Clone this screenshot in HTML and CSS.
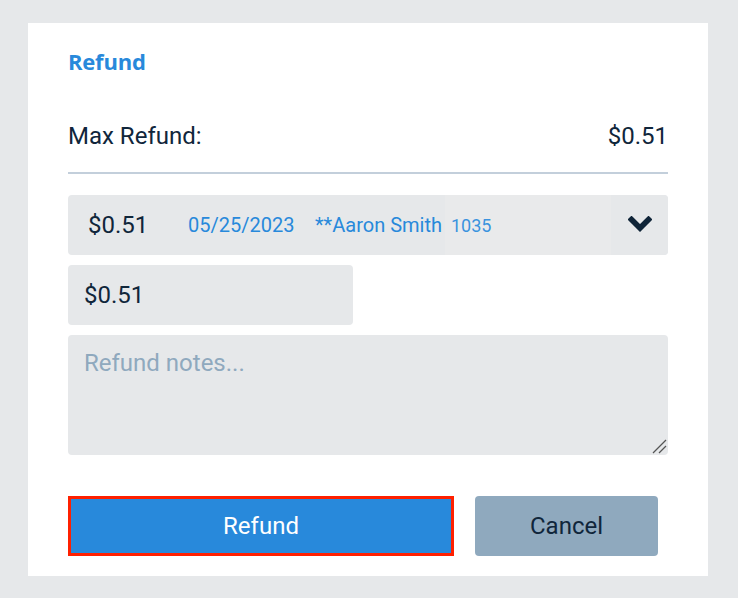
FILE: index.html
```html
<!DOCTYPE html>
<html>
<head>
<meta charset="utf-8">
<link rel="stylesheet" href="styles.css">
</head>
<body>
<div class="card">
  <h2 class="title">Refund</h2>
  <div class="max-row">
    <span>Max Refund:</span>
    <span>$0.51</span>
  </div>
  <div class="divider"></div>
  <div class="select">
    <span class="sel-amount">$0.51</span>
    <span class="sel-date">05/25/2023</span>
    <span class="sel-name">**Aaron Smith</span>
    <span class="sel-rest"><span class="sel-num">1035</span></span>
    <span class="sel-arrow">
      <svg width="24" height="16" viewBox="0 0 24 16"><polyline points="3.5,3.5 12,12 20.5,3.5" fill="none" stroke="#0f2438" stroke-width="5.5" stroke-linejoin="miter" stroke-linecap="square"/></svg>
    </span>
  </div>
  <div class="amount-input">$0.51</div>
  <div class="notes">
    <span class="placeholder">Refund notes...</span>
    <svg class="grip" width="16" height="16" viewBox="0 0 16 16"><line x1="2" y1="15" x2="15" y2="2" stroke="#555" stroke-width="1.3"/><line x1="8" y1="15" x2="15" y2="8" stroke="#555" stroke-width="1.3"/></svg>
  </div>
  <div class="actions">
    <button class="btn btn-primary">Refund</button>
    <button class="btn btn-cancel">Cancel</button>
  </div>
</div>
</body>
</html>
```
FILE: styles.css
```css
html, body {
  margin: 0;
  padding: 0;
}
body {
  background: #e6e8ea;
  font-family: Roboto, "Liberation Sans", sans-serif;
  color: #10263b;
  width: 738px;
  height: 598px;
  overflow: hidden;
}
.card {
  box-sizing: border-box;
  margin: 23px 0 0 28px;
  width: 680px;
  height: 553px;
  background: #ffffff;
  padding: 0 40px;
  display: flex;
  flex-direction: column;
}
.title {
  margin: 0;
  padding-top: 24px;
  font-family: "Open Sans", sans-serif;
  font-weight: 700;
  font-size: 22px;
  line-height: 28px;
  color: #2889db;
  letter-spacing: -0.2px;
}
.max-row {
  margin-top: 46px;
  display: flex;
  justify-content: space-between;
  font-size: 24px;
  line-height: 30px;
}
.divider {
  margin-top: 21px;
  height: 2px;
  background: #c3cfdb;
}
.select {
  margin-top: 21px;
  height: 60px;
  border-radius: 4px;
  background: #e6e8ea;
  display: flex;
  align-items: center;
  overflow: hidden;
}
.sel-amount {
  padding-left: 20px;
  width: 120px;
  box-sizing: border-box;
  font-size: 24px;
}
.sel-date {
  color: #2889db;
  font-size: 20px;
  width: 127px;
}
.sel-name {
  color: #2889db;
  font-size: 20px;
  width: 130px;
}
.sel-rest {
  align-self: stretch;
  flex: 1;
  display: flex;
  align-items: center;
  background: #e9eaeb;
}
.sel-num {
  color: #3a93de;
  font-size: 18px;
  margin-left: 6px;
}
.sel-arrow {
  align-self: stretch;
  width: 57px;
  display: flex;
  align-items: center;
  justify-content: center;
  background: #e6e8ea;
}
.sel-arrow svg {
  display: block;
  margin-top: -2px;
}
.amount-input {
  margin-top: 10px;
  width: 285px;
  height: 60px;
  box-sizing: border-box;
  border-radius: 4px;
  background: #e6e8ea;
  padding-left: 16px;
  display: flex;
  align-items: center;
  font-size: 24px;
}
.notes {
  position: relative;
  margin-top: 10px;
  height: 120px;
  box-sizing: border-box;
  border-radius: 4px;
  background: #e6e8ea;
  padding: 14px 16px;
}
.placeholder {
  color: #8fa9be;
  font-size: 24px;
  line-height: 28px;
}
.grip {
  position: absolute;
  right: 1px;
  bottom: 1px;
}
.actions {
  margin-top: 41px;
  display: flex;
  gap: 21px;
}
.btn {
  height: 60px;
  font-family: Roboto, "Liberation Sans", sans-serif;
  font-size: 24px;
  border-radius: 4px;
  cursor: pointer;
}
.btn-primary {
  width: 386px;
  background: #2889db;
  color: #ffffff;
  border: 3px solid #ff2000;
  border-radius: 0;
}
.btn-cancel {
  width: 183px;
  background: #8fa9be;
  color: #10263b;
  border: none;
}
```
